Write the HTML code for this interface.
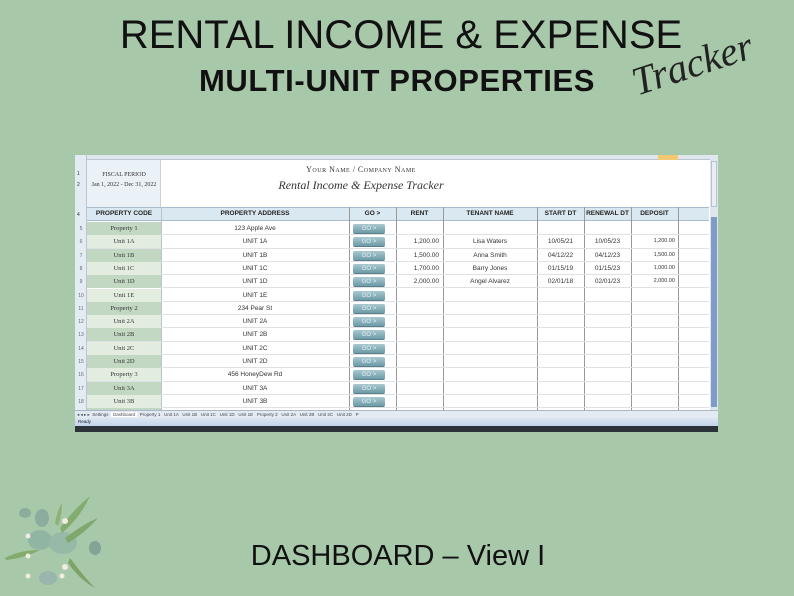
<!DOCTYPE html>
<html><head><meta charset="utf-8"><style>
*{margin:0;padding:0;box-sizing:border-box}
body{width:794px;height:596px;background:#a8c8aa;position:relative;overflow:hidden;font-family:"Liberation Sans",sans-serif}
.t1{position:absolute;left:0;width:794px;top:13px;text-align:center;font-size:40px;color:#111;letter-spacing:0px;padding-left:8px}
.t2{position:absolute;left:199px;top:63px;font-size:31px;font-weight:bold;color:#111;letter-spacing:0.6px}
.tr{position:absolute;left:630px;top:40px;font-family:"Liberation Serif",serif;font-style:italic;font-size:40px;color:#222;transform:rotate(-18deg)}
.foot{position:absolute;left:0;width:794px;top:540px;text-align:center;font-size:29px;color:#111;padding-left:2px}
.ss{position:absolute;left:75px;top:155px;width:643px;height:277px;background:#fff;overflow:hidden;font-size:6.5px;color:#333}
.a{position:absolute}
.c{text-align:center}
.go{position:absolute;width:32px;height:9px;border-radius:2px;background:linear-gradient(#a9c8cf,#6c9ca8);color:#e8f2f4;font-size:6px;text-align:center;line-height:10px;box-shadow:0 1px 0 #5b7f88}
</style></head><body>
<div class="t1">RENTAL INCOME &amp; EXPENSE</div>
<div class="t2">MULTI-UNIT PROPERTIES</div>
<div class="tr">Tracker</div>
<div class="foot">DASHBOARD – View I</div>
<svg class="a" style="left:0;top:488px" width="115" height="100" viewBox="0 0 115 100">
<g fill="#7fa88c" opacity="0.9">
<ellipse cx="40" cy="52" rx="12" ry="10" fill="#8fb3a3"/>
<ellipse cx="63" cy="55" rx="14" ry="11" fill="#95b8a8"/>
<ellipse cx="42" cy="30" rx="7" ry="9" fill="#8aab9c"/>
<ellipse cx="25" cy="25" rx="6" ry="5" fill="#8aab9c"/>
<ellipse cx="95" cy="60" rx="6" ry="7" fill="#7f9f96"/>
<ellipse cx="48" cy="90" rx="9" ry="7" fill="#98b5ad"/>
<path d="M60 40 Q75 20 90 8 Q80 30 62 45Z" fill="#80ab6a"/>
<path d="M65 50 Q85 35 98 30 Q85 45 68 55Z" fill="#7aa566"/>
<path d="M5 70 Q20 62 40 62 Q25 70 6 72Z" fill="#7fa866"/>
<path d="M70 70 Q85 90 95 100 Q80 92 68 75Z" fill="#7aa060"/>
<path d="M55 35 Q58 20 62 15 Q62 28 58 38Z" fill="#89b070"/>
</g>
<g fill="#f0ece0"><circle cx="65" cy="33" r="3"/><circle cx="28" cy="48" r="2.5"/><circle cx="28" cy="68" r="2.5"/><circle cx="65" cy="79" r="3"/><circle cx="62" cy="88" r="2.5"/><circle cx="28" cy="88" r="2.5"/></g>
</svg>
<div class="ss">
<div class="a" style="left:0;top:0;width:643px;height:5px;background:#dfe6ee;border-bottom:1px solid #b9c5d3"></div>
<div class="a" style="left:583px;top:0;width:20px;height:5px;background:#f3c873"></div>
<div class="a" style="left:0;top:0;width:12px;height:262px;background:#e4ebf3;border-right:1px solid #b9c5d3"></div>
<div class="a" style="left:12px;top:5px;width:74px;height:47px;background:#eaf1f7;border-right:1px solid #c9d2dc"></div>
<div class="a c" style="left:12px;top:17px;width:74px;font-family:'Liberation Serif',serif;font-size:6px">FISCAL PERIOD</div>
<div class="a c" style="left:12px;top:27px;width:74px;font-family:'Liberation Serif',serif;font-size:6px">Jan 1, 2022 - Dec 31, 2022</div>
<div class="a" style="left:2px;top:16px;font-size:5px">1</div><div class="a" style="left:2px;top:27px;font-size:5px">2</div>
<div class="a c" style="left:86px;top:10px;width:400px;font-family:'Liberation Serif',serif;font-size:8px;letter-spacing:0.5px;font-variant:small-caps">Your Name / Company Name</div>
<div class="a c" style="left:86px;top:23px;width:400px;font-family:'Liberation Serif',serif;font-style:italic;font-size:12px">Rental Income &amp; Expense Tracker</div>
<div class="a" style="left:12px;top:52px;width:622px;height:14px;background:#dae8f1;border-top:1px solid #a8bccb;border-bottom:1px solid #a8bccb"></div>
<div class="a" style="left:2px;top:57px;font-size:5px">4</div>
<div style="font-weight:bold;font-size:6.5px;color:#222">
<div class="a c" style="left:12px;top:55px;width:74px">PROPERTY CODE</div>
<div class="a c" style="left:86px;top:55px;width:188px">PROPERTY ADDRESS</div>
<div class="a c" style="left:274px;top:55px;width:47px">GO &gt;</div>
<div class="a c" style="left:321px;top:55px;width:47px">RENT</div>
<div class="a c" style="left:368px;top:55px;width:94px">TENANT NAME</div>
<div class="a c" style="left:462px;top:55px;width:47px">START DT</div>
<div class="a c" style="left:509px;top:55px;width:47px">RENEWAL DT</div>
<div class="a c" style="left:556px;top:55px;width:47px">DEPOSIT</div>
</div>
<div class="a" style="left:86px;top:52px;width:1px;height:210px;background:#b8c2c8"></div>
<div class="a" style="left:274px;top:52px;width:1px;height:210px;background:#999"></div>
<div class="a" style="left:321px;top:52px;width:1px;height:210px;background:#999"></div>
<div class="a" style="left:368px;top:52px;width:1px;height:210px;background:#999"></div>
<div class="a" style="left:462px;top:52px;width:1px;height:210px;background:#999"></div>
<div class="a" style="left:509px;top:52px;width:1px;height:210px;background:#999"></div>
<div class="a" style="left:556px;top:52px;width:1px;height:210px;background:#999"></div>
<div class="a" style="left:603px;top:52px;width:1px;height:210px;background:#999"></div>
<div id="rows"></div>
<div class="a" style="left:635px;top:0;width:8px;height:262px;background:#dfe6ee"></div>
<div class="a" style="left:636px;top:62px;width:6px;height:190px;background:#7f9cc8"></div>
<div class="a" style="left:636px;top:6px;width:6px;height:46px;background:#e9eef4;border:1px solid #b6c2d2"></div>
<div class="a" style="left:0;top:255px;width:643px;height:8px;background:#e3eaf2;border-top:1px solid #aab7c6;font-size:4.5px;color:#445;line-height:7px;white-space:nowrap;padding-left:2px">◂ ◂ ▸ ▸ &nbsp;Settings &nbsp;<span style="background:#fff;padding:0 2px">Dashboard</span> &nbsp;Property 1 &nbsp; Unit 1A &nbsp; Unit 1B &nbsp; Unit 1C &nbsp; Unit 1D &nbsp; Unit 1E &nbsp; Property 2 &nbsp; Unit 2A &nbsp; Unit 2B &nbsp; Unit 2C &nbsp; Unit 2D &nbsp; P</div>
<div class="a" style="left:0;top:263px;width:643px;height:8px;background:linear-gradient(#dbe6f4,#c2d3ea);font-size:4.5px;line-height:8px;padding-left:3px;color:#223">Ready</div>
<div class="a" style="left:0;top:271px;width:643px;height:6px;background:#2b3238"></div>
</div>
<script>
var d=[["Property 1","123 Apple Ave"],["Unit 1A","UNIT 1A","1,200.00","Lisa Waters","10/05/21","10/05/23","1,200.00"],["Unit 1B","UNIT 1B","1,500.00","Anna Smith","04/12/22","04/12/23","1,500.00"],["Unit 1C","UNIT 1C","1,700.00","Barry Jones","01/15/19","01/15/23","1,000.00"],["Unit 1D","UNIT 1D","2,000.00","Angel Alvarez","02/01/18","02/01/23","2,000.00"],["Unit 1E","UNIT 1E"],["Property 2","234 Pear St"],["Unit 2A","UNIT 2A"],["Unit 2B","UNIT 2B"],["Unit 2C","UNIT 2C"],["Unit 2D","UNIT 2D"],["Property 3","456 HoneyDew Rd"],["Unit 3A","UNIT 3A"],["Unit 3B","UNIT 3B"],["Unit 3C","UNIT 3C"]];
var h="";
d.forEach(function(r,i){var t=67+i*13.3;var bg=i%2==0?"#c3d8c2":"#e2ede0";
h+='<div class="a" style="left:12px;top:'+t+'px;width:622px;height:13.3px;border-bottom:1px solid #dde2e6"></div>';
h+='<div class="a" style="left:12px;top:'+t+'px;width:74px;height:13px;background:'+bg+'"></div>';
h+='<div class="a c" style="left:0;top:'+(t+4)+'px;width:12px;font-size:5px;color:#667">'+(i+5)+'</div>';
h+='<div class="a c" style="left:12px;top:'+(t+3)+'px;width:74px;font-family:\'Liberation Serif\',serif;font-size:6.5px">'+r[0]+'</div>';
h+='<div class="a c" style="left:86px;top:'+(t+3)+'px;width:188px">'+r[1]+'</div>';
h+='<div class="go" style="left:278px;top:'+(t+2)+'px">GO &gt;</div>';
if(r[2]){h+='<div class="a" style="left:321px;top:'+(t+3)+'px;width:43px;text-align:right">'+r[2]+'</div>';
h+='<div class="a c" style="left:368px;top:'+(t+3)+'px;width:94px">'+r[3]+'</div>';
h+='<div class="a c" style="left:462px;top:'+(t+3)+'px;width:47px">'+r[4]+'</div>';
h+='<div class="a c" style="left:509px;top:'+(t+3)+'px;width:47px">'+r[5]+'</div>';
h+='<div class="a" style="left:556px;top:'+(t+3)+'px;width:44px;text-align:right;font-size:5.5px">'+r[6]+'</div>';}
});
document.getElementById("rows").innerHTML=h;
</script>
</body></html>
